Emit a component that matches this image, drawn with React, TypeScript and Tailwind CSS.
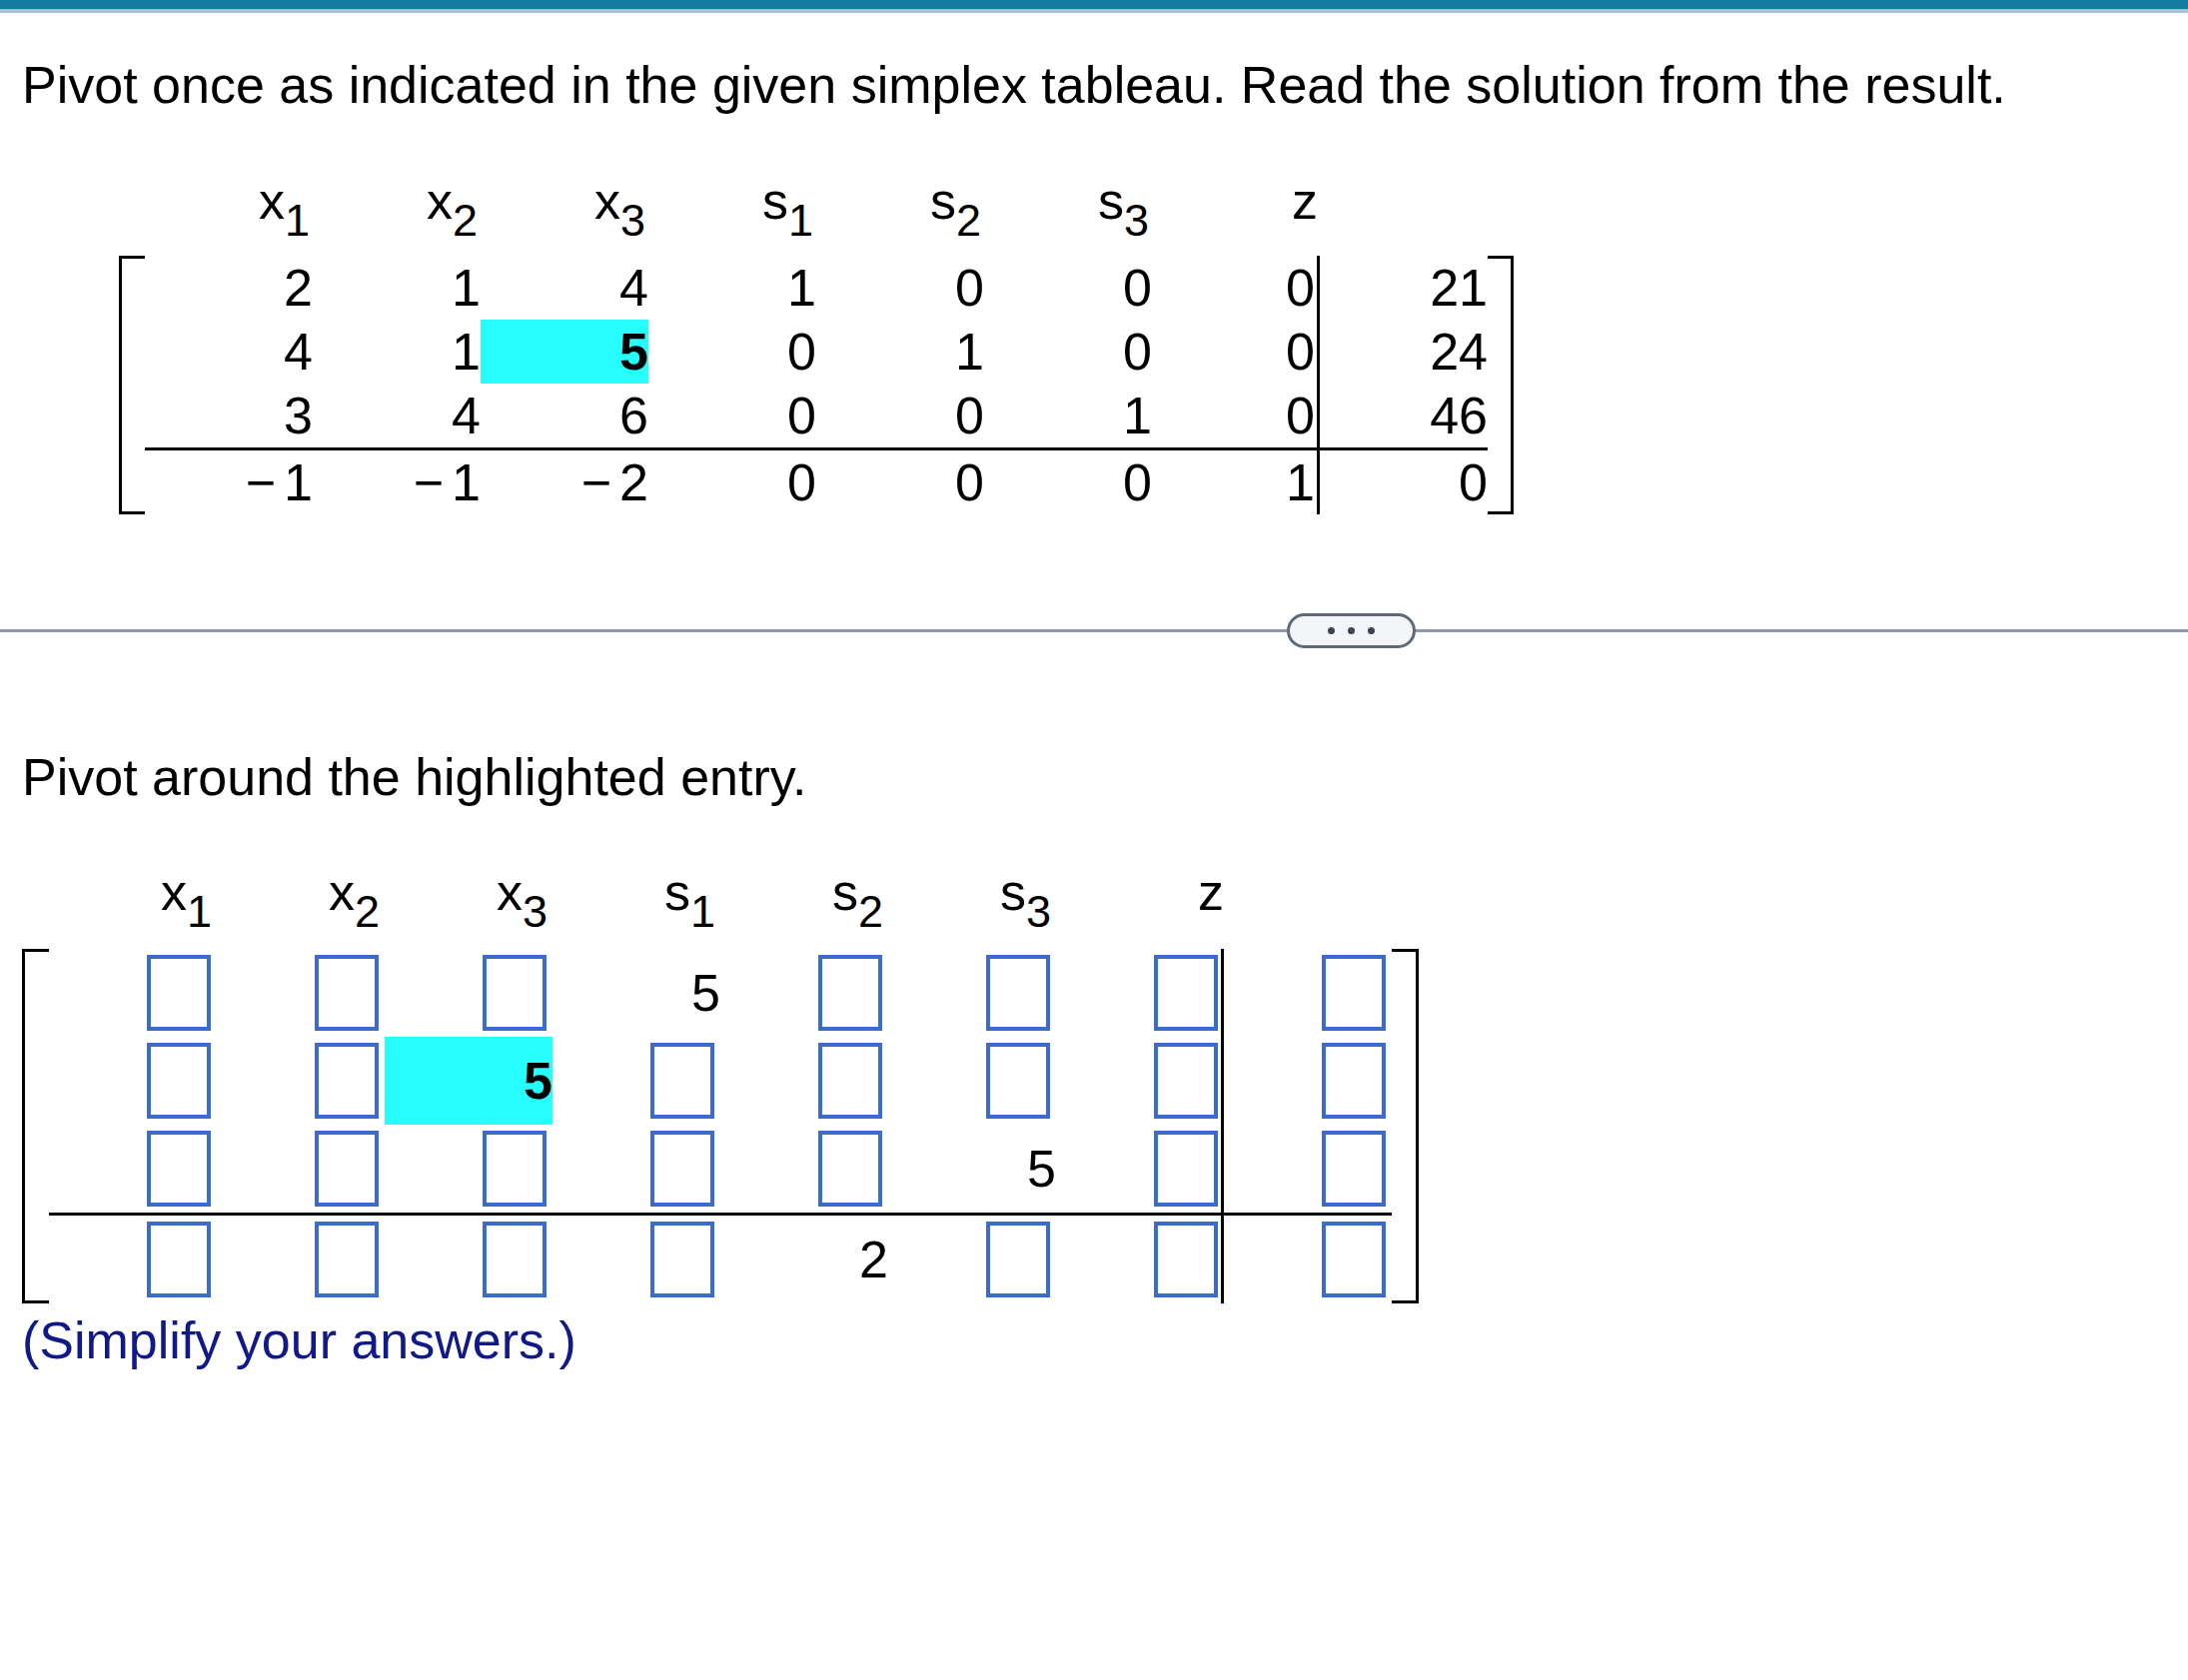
import React from 'react'
import clsx from 'clsx'

const font = "font-['Liberation_Sans',Arial,Helvetica,sans-serif]"

type Head = { v: string; sub?: string }

const heads: Head[] = [
    { v: 'x', sub: '1' }, { v: 'x', sub: '2' }, { v: 'x', sub: '3' },
    { v: 's', sub: '1' }, { v: 's', sub: '2' }, { v: 's', sub: '3' },
    { v: 'z' }, { v: '' },
]

const topRows = [
    [2, 1, 4, 1, 0, 0, 0, 21],
    [4, 1, 5, 0, 1, 0, 0, 24],
    [3, 4, 6, 0, 0, 1, 0, 46],
    [-1, -1, -2, 0, 0, 0, 1, 0],
]

// 'b' = empty answer box, 'p' = pivot (highlighted 5)
const bottomRows: (string | number)[][] = [
    ['b', 'b', 'b', 5, 'b', 'b', 'b', 'b'],
    ['b', 'b', 'p', 'b', 'b', 'b', 'b', 'b'],
    ['b', 'b', 'b', 'b', 'b', 5, 'b', 'b'],
    ['b', 'b', 'b', 'b', 2, 'b', 'b', 'b'],
]

function Num({ n, bold }: { n: number; bold?: boolean }) {
    if (n < 0) {
        return (
            <span>
                <span>−</span>
                <span className="ml-[8px]">{-n}</span>
            </span>
        )
    }
    return <span className={bold ? 'font-bold' : ''}>{n}</span>
}

function HeadLabel({ h }: { h: Head }) {
    return (
        <>
            <span>{h.v}</span>
            {h.sub && <span className="relative top-[17px] text-[45px]">{h.sub}</span>}
        </>
    )
}

function TopMatrix() {
    return (
        <div className="ml-[97px] mt-[56px]">
            {/* column headers */}
            <div className="flex h-[85px] pl-[26px] leading-[60px]">
                {heads.map((h, i) => (
                    <div key={i} className={clsx('w-[168px] text-right', i === 6 ? 'pr-[2px]' : 'pr-[3px]')}>
                        <HeadLabel h={h} />
                    </div>
                ))}
            </div>

            <div className="flex">
                <div className="w-[26px] border-y-[3px] border-l-[3px] border-black" />
                <div className="flex flex-col">
                    {topRows.map((row, r) => (
                        <React.Fragment key={r}>
                            {r === 3 && <div className="h-[3px] bg-black" />}
                            <div className="flex">
                                {row.map((n, c) => (
                                    <div
                                        key={c}
                                        className={clsx(
                                            'flex h-[64px] w-[168px] items-center justify-end',
                                            c === 6 && 'border-r-[3px] border-black pr-[2px]',
                                            r === 1 && c === 2 && 'bg-[#26fdfd]'
                                        )}
                                    >
                                        <Num n={n} bold={r === 1 && c === 2} />
                                    </div>
                                ))}
                            </div>
                        </React.Fragment>
                    ))}
                </div>
                <div className="w-[26px] border-y-[3px] border-r-[3px] border-black" />
            </div>
        </div>
    )
}

function AnswerBox({ last }: { last?: boolean }) {
    return (
        <div className={clsx('h-[76px] w-[64px] border-[4px] border-[#3a6bce] bg-white', last ? 'mr-[3px]' : 'mr-[6px]')} />
    )
}

function BottomMatrix() {
    return (
        <div className="mt-[55px]">
            <div className="flex h-[87px] pl-[27px] leading-[60px]">
                {heads.map((h, i) => (
                    <div key={i} className={clsx('w-[168px] text-right', i === 6 ? 'pr-0' : 'pr-[5px]')}>
                        <HeadLabel h={h} />
                    </div>
                ))}
            </div>

            <div className="flex">
                <div className="w-[27px] border-y-[3px] border-l-[3px] border-black" />
                <div className="flex flex-col">
                    {bottomRows.map((row, r) => (
                        <React.Fragment key={r}>
                            {r === 3 && <div className="h-[3px] bg-black" />}
                            <div className="flex">
                                {row.map((v, c) => (
                                    <div
                                        key={c}
                                        className={clsx(
                                            'flex h-[88px] w-[168px] items-center justify-end',
                                            c === 6 && 'border-r-[3px] border-black',
                                            v === 'p' && 'bg-[#26fdfd]'
                                        )}
                                    >
                                        {v === 'b' && <AnswerBox last={c === 6} />}
                                        {v === 'p' && <span className="font-bold">5</span>}
                                        {typeof v === 'number' && <span>{v}</span>}
                                    </div>
                                ))}
                            </div>
                        </React.Fragment>
                    ))}
                </div>
                <div className="w-[27px] border-y-[3px] border-r-[3px] border-black" />
            </div>
        </div>
    )
}

export default function App() {
    return (
        <div className={clsx('min-h-screen w-full bg-white text-[52px] text-black', font)}>
            {/* header strip */}
            <div className="h-[9px] bg-[#127b9f]" />
            <div className="h-[4px] bg-[#a9c4d4]" />

            <div className="pl-[22px]">
                <p className="mt-[42px] leading-[60px]">
                    Pivot once as indicated in the given simplex tableau. Read the solution from the result.
                </p>
                <TopMatrix />
            </div>

            {/* divider with expand button */}
            <div className="mt-[99px] flex h-[35px] items-center">
                <div className="h-[3px] w-[1288px] shrink-0 bg-[#8f98a9]" />
                <div className="flex h-[35px] w-[129px] shrink-0 items-center justify-center gap-[13px] rounded-full border-[3px] border-[#5f6979] bg-[#f4f5f8]">
                    <span className="h-[7px] w-[7px] rounded-full bg-[#3d4552]" />
                    <span className="h-[7px] w-[7px] rounded-full bg-[#3d4552]" />
                    <span className="h-[7px] w-[7px] rounded-full bg-[#3d4552]" />
                </div>
                <div className="h-[3px] flex-1 bg-[#8f98a9]" />
            </div>

            <div className="pl-[22px]">
                <p className="mt-[99px] leading-[60px]">Pivot around the highlighted entry.</p>
                <BottomMatrix />
                <p className="mt-[7px] leading-[60px] text-[#10188a]">(Simplify your answers.)</p>
            </div>
        </div>
    )
}
